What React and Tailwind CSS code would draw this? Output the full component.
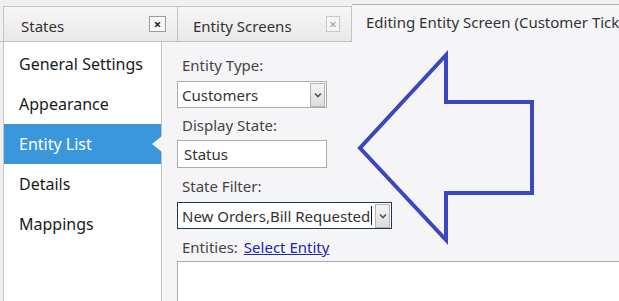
import React from "react";

function Chevron() {
  return (
    <div className="w-[15px] h-[24px] border border-[#b5b5b5] bg-gradient-to-b from-[#f4f4f4] to-[#dcdcdc] flex items-center justify-center">
      <svg width="8" height="6" viewBox="0 0 8 6">
        <path d="M1 1.5 L4 4.5 L7 1.5" stroke="#555" strokeWidth="1.6" fill="none" />
      </svg>
    </div>
  );
}

export default function App() {
  const font = { fontFamily: '"Noto Sans", "Open Sans", sans-serif' };
  return (
    <div
      className="relative w-[619px] h-[301px] overflow-hidden bg-[#f0f0f0] text-[15px] leading-[20px]"
      style={font}
    >
      {/* tab strip */}
      <div className="h-[42px] flex items-end pl-[3px] border-b border-[#c2c2c2]">
        <div className="w-[175px] h-[35px] border border-b-0 border-[#c4c4c4] bg-gradient-to-b from-[#f6f6f6] to-[#e9e9e9] flex items-center justify-between pl-[17px] pr-[11px] text-[#333]">
          <span className="pt-[3px]">States</span>
          <div className="w-[17px] h-[16px] border border-[#9a9a9a] bg-[#f7f7f7] flex items-center justify-center text-[13px] font-bold text-[#222] leading-none">
            ×
          </div>
        </div>
        <div className="w-[174px] h-[35px] border-r border-t border-[#c4c4c4] bg-gradient-to-b from-[#f6f6f6] to-[#e9e9e9] flex items-center justify-between pl-[15px] pr-[11px] text-[#333]">
          <span className="pt-[3px]">Entity Screens</span>
          <div className="w-[14px] h-[16px] border border-[#c8c8c8] bg-[#f4f4f4] flex items-center justify-center text-[13px] text-[#999] leading-none">
            ×
          </div>
        </div>
        <div className="flex-1 h-[38px] -mb-px border-t border-[#b0b0b0] bg-[#f5f5f7] flex items-center pl-[14px] pb-[3px] text-[#333] whitespace-nowrap overflow-hidden">
          Editing Entity Screen (Customer Tickets)
        </div>
      </div>

      {/* body */}
      <div className="flex h-[259px]">
        <div className="ml-[3px] w-[159px] bg-white border-l border-r border-[#c4c4c4] pt-[2px] text-[#1a1a1a] text-[16px]">
          <div className="h-[40px] flex items-center pl-[15px]">General Settings</div>
          <div className="h-[40px] flex items-center pl-[15px]">Appearance</div>
          <div className="relative h-[40px] flex items-center pl-[15px] bg-[#3a97dc] text-white">
            Entity List
            <div className="absolute right-[-1px] top-[12px] w-0 h-0 border-t-[8px] border-b-[8px] border-r-[10px] border-t-transparent border-b-transparent border-r-[#f5f5f7]" />
          </div>
          <div className="h-[40px] flex items-center pl-[15px]">Details</div>
          <div className="h-[40px] flex items-center pl-[15px]">Mappings</div>
        </div>

        <div className="flex-1 bg-[#f5f5f7] pl-[15px] pt-[13px] flex flex-col text-[#444]">
          <div className="pl-[5px] h-[20px]">Entity Type:</div>
          <div className="mt-[6px] w-[150px] h-[27px] border border-[#ababab] bg-white flex items-center justify-between pl-[4px] pr-[1px] text-[#333]">
            <span>Customers</span>
            <Chevron />
          </div>
          <div className="mt-[7px] pl-[5px] h-[20px]">Display State:</div>
          <div className="mt-[5px] w-[150px] h-[28px] border border-[#ababab] bg-white flex items-center pl-[6px] text-[#333]">
            Status
          </div>
          <div className="mt-[8px] pl-[5px] h-[20px]">State Filter:</div>
          <div className="mt-[6px] w-[215px] h-[27px] border border-[#1d3757] bg-white flex items-center justify-between pl-[4px] pr-[1px] text-[#333]">
            <span className="flex items-center whitespace-nowrap">
              New Orders,Bill Requested
              <span className="inline-block w-px h-[19px] bg-[#111] ml-[1px]" />
            </span>
            <Chevron />
          </div>
          <div className="mt-[8px] pl-[5px] h-[20px] flex gap-[6px]">
            <span>Entities:</span>
            <span className="text-[#2323b4] underline">Select Entity</span>
          </div>
          <div className="mt-[4px] flex-1 border-l border-t border-[#ababab] bg-white" />
        </div>
      </div>

      {/* arrow annotation */}
      <svg
        className="absolute left-0 top-0 pointer-events-none"
        width="619"
        height="301"
        viewBox="0 0 619 301"
      >
        <polygon
          points="446,55 360,148 446,240 446,193 532,193 532,102 446,102"
          fill="none"
          stroke="#3b46bf"
          strokeWidth="4"
          strokeLinejoin="miter"
        />
      </svg>
    </div>
  );
}
